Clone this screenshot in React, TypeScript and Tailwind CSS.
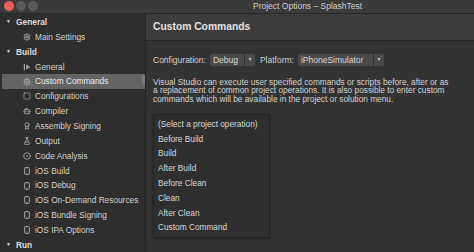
import { Settings, Square, Bot, Award, FlaskConical, CircleDot, Smartphone } from "lucide-react";

type Row = { label: string; kind: "head" | "item"; icon?: string; selected?: boolean };

const rows: Row[] = [
  { label: "General", kind: "head" },
  { label: "Main Settings", kind: "item", icon: "gear" },
  { label: "Build", kind: "head" },
  { label: "General", kind: "item", icon: "flag" },
  { label: "Custom Commands", kind: "item", icon: "gear", selected: true },
  { label: "Configurations", kind: "item", icon: "square" },
  { label: "Compiler", kind: "item", icon: "bot" },
  { label: "Assembly Signing", kind: "item", icon: "award" },
  { label: "Output", kind: "item", icon: "flask" },
  { label: "Code Analysis", kind: "item", icon: "target" },
  { label: "iOS Build", kind: "item", icon: "phone" },
  { label: "iOS Debug", kind: "item", icon: "phone" },
  { label: "iOS On-Demand Resources", kind: "item", icon: "phone" },
  { label: "iOS Bundle Signing", kind: "item", icon: "phone" },
  { label: "iOS IPA Options", kind: "item", icon: "phone" },
  { label: "Run", kind: "head" },
];

const operations = [
  "(Select a project operation)",
  "Before Build",
  "Build",
  "After Build",
  "Before Clean",
  "Clean",
  "After Clean",
  "Custom Command",
];

function RowIcon({ name }: { name?: string }) {
  const cls = "w-[8px] h-[8px] text-[#a8a8a8]";
  switch (name) {
    case "gear":
      return <Settings className={cls} strokeWidth={3} />;
    case "square":
      return <Square className={cls} strokeWidth={2} />;
    case "bot":
      return <Bot className={cls} strokeWidth={2.5} />;
    case "award":
      return <Award className={cls} strokeWidth={2.5} />;
    case "flask":
      return <FlaskConical className={cls} strokeWidth={2.5} />;
    case "target":
      return <CircleDot className={cls} strokeWidth={2.5} />;
    case "phone":
      return <Smartphone className={cls} strokeWidth={3} />;
    case "flag":
      return (
        <svg viewBox="0 0 10 10" className={cls}>
          <rect x="1" y="1" width="1.5" height="8" fill="currentColor" />
          <path d="M4 2 L9 5 L4 8 Z" fill="currentColor" />
        </svg>
      );
    default:
      return null;
  }
}

function Dropdown({ value, width }: { value: string; width: string }) {
  return (
    <div className={`flex h-[12px] items-stretch rounded-[2px] bg-[#4a4a4a] ${width}`}>
      <div className="flex flex-1 items-center px-[3px] text-[#d8d8d8]">{value}</div>
      <div className="w-px bg-[#333]" />
      <div className="flex w-[10px] items-center justify-center text-[5px] text-[#cfcfcf]">▼</div>
    </div>
  );
}

export default function App() {
  return (
    <div
      className="flex h-[252px] w-[474px] flex-col overflow-hidden bg-[#323232] text-[#d4d4d4]"
      style={{ fontFamily: '"Liberation Sans", Arial, sans-serif' }}
    >
      {/* title bar */}
      <div className="relative flex h-[14px] items-center border-b border-[#272727] bg-[#3b3b3b]">
        <div className="flex gap-[2px] pl-[4px]">
          <div className="h-[10px] w-[10px] rounded-full bg-[#ec5f5a]" />
          <div className="h-[10px] w-[10px] rounded-full bg-[#5a5a5a]" />
          <div className="h-[10px] w-[10px] rounded-full bg-[#5a5a5a]" />
        </div>
        <div className="ml-[215px] text-[8.5px] text-[#cfcfcf]">Project Options – SplashTest</div>
      </div>

      <div className="flex flex-1">
        {/* sidebar */}
        <div className="relative w-[146px] border-r border-[#252525] bg-[#2e2e2e] pt-[1px]">
          {rows.map((r, i) =>
            r.kind === "head" ? (
              <div
                key={i}
                className="flex h-[14.87px] items-center whitespace-nowrap pl-[6px] text-[8.4px] font-bold text-[#dcdcdc]"
              >
                <span className="mr-[5px] text-[5px]">▼</span>
                {r.label}
              </div>
            ) : (
              <div
                key={i}
                className={`ml-[2px] flex h-[14.87px] items-center whitespace-nowrap pl-[21px] text-[8.3px] ${
                  r.selected ? "bg-[#646464] text-[#ececec]" : "text-[#d2d2d2]"
                }`}
              >
                <span className="mr-[4px] flex w-[8px] justify-center">
                  <RowIcon name={r.icon} />
                </span>
                {r.label}
              </div>
            )
          )}
          <div className="absolute right-0 top-[61px] h-[9px] w-[3px] bg-[#777]" />
        </div>

        {/* main */}
        <div className="flex flex-1 flex-col bg-[#333333]">
          <div className="flex h-[27px] items-center border-b border-[#262626] bg-[#3c3c3c] pl-[7px] text-[10.3px] font-bold text-[#e2e2e2]">
            Custom Commands
          </div>

          <div className="mt-[13px] flex items-center pl-[7px] text-[8.5px]">
            <span className="mr-[4px] text-[#d2d2d2]">Configuration:</span>
            <Dropdown value="Debug" width="w-[45px]" />
            <span className="ml-[5px] mr-[4px] text-[#d2d2d2]">Platform:</span>
            <Dropdown value="iPhoneSimulator" width="w-[86px]" />
          </div>

          <p className="mt-[11px] whitespace-nowrap pl-[7px] text-[8.3px] leading-[8.7px] text-[#d4d4d4]">
            Visual Studio can execute user specified commands or scripts before, after or as
            <br />
            a replacement of common project operations. It is also possible to enter custom
            <br />
            commands which will be available in the project or solution menu.
          </p>

          <div className="ml-[7px] mt-[10px] h-[124px] w-[117px] border border-[#262626] bg-[#2f2f2f] pt-[2px] shadow-[0_1px_2px_rgba(0,0,0,0.4)]">
            {operations.map((o) => (
              <div key={o} className="flex h-[14.8px] items-center pl-[4px] text-[8.3px] text-[#dadada]">
                {o}
              </div>
            ))}
          </div>
        </div>
      </div>
    </div>
  );
}
